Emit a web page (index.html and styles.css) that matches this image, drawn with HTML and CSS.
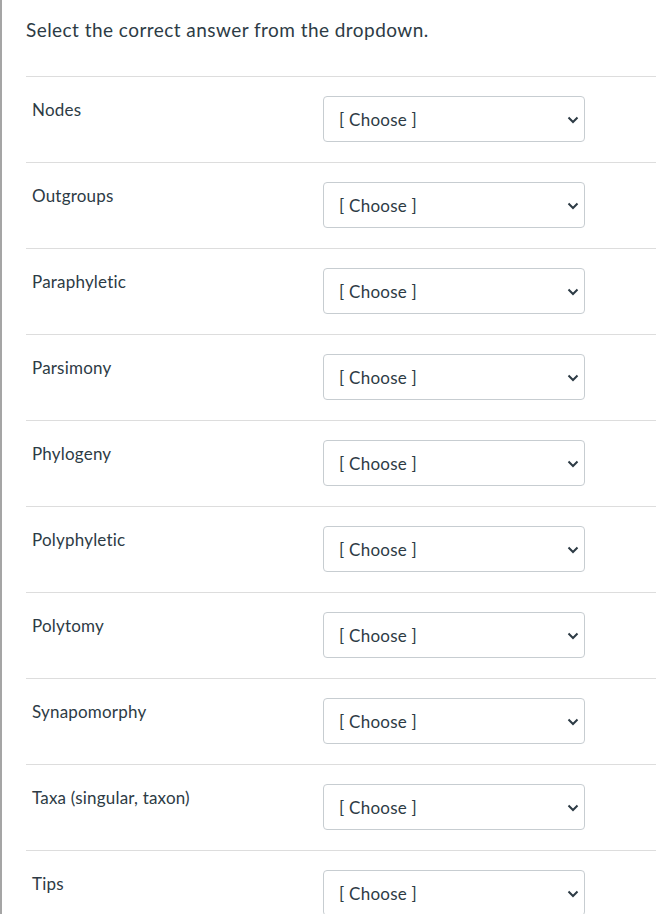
FILE: index.html
```html
<!DOCTYPE html>
<html lang="en">
<head>
<meta charset="utf-8">
<title>Dropdown question</title>
<link rel="stylesheet" href="styles.css">
</head>
<body>
<div class="page">
  <p class="prompt">Select the correct answer from the dropdown.</p>
  <div class="rows">
    <div class="row"><div class="label">Nodes</div><div class="pick"><select class="sel"><option>[ Choose ]</option></select><svg class="chev" viewBox="0 0 12 8" width="12" height="8"><path d="M1.5 1.5 L6 6 L10.5 1.5" fill="none" stroke="#2d3b45" stroke-width="2"/></svg></div></div>
    <div class="row"><div class="label">Outgroups</div><div class="pick"><select class="sel"><option>[ Choose ]</option></select><svg class="chev" viewBox="0 0 12 8" width="12" height="8"><path d="M1.5 1.5 L6 6 L10.5 1.5" fill="none" stroke="#2d3b45" stroke-width="2"/></svg></div></div>
    <div class="row"><div class="label">Paraphyletic</div><div class="pick"><select class="sel"><option>[ Choose ]</option></select><svg class="chev" viewBox="0 0 12 8" width="12" height="8"><path d="M1.5 1.5 L6 6 L10.5 1.5" fill="none" stroke="#2d3b45" stroke-width="2"/></svg></div></div>
    <div class="row"><div class="label">Parsimony</div><div class="pick"><select class="sel"><option>[ Choose ]</option></select><svg class="chev" viewBox="0 0 12 8" width="12" height="8"><path d="M1.5 1.5 L6 6 L10.5 1.5" fill="none" stroke="#2d3b45" stroke-width="2"/></svg></div></div>
    <div class="row"><div class="label">Phylogeny</div><div class="pick"><select class="sel"><option>[ Choose ]</option></select><svg class="chev" viewBox="0 0 12 8" width="12" height="8"><path d="M1.5 1.5 L6 6 L10.5 1.5" fill="none" stroke="#2d3b45" stroke-width="2"/></svg></div></div>
    <div class="row"><div class="label">Polyphyletic</div><div class="pick"><select class="sel"><option>[ Choose ]</option></select><svg class="chev" viewBox="0 0 12 8" width="12" height="8"><path d="M1.5 1.5 L6 6 L10.5 1.5" fill="none" stroke="#2d3b45" stroke-width="2"/></svg></div></div>
    <div class="row"><div class="label">Polytomy</div><div class="pick"><select class="sel"><option>[ Choose ]</option></select><svg class="chev" viewBox="0 0 12 8" width="12" height="8"><path d="M1.5 1.5 L6 6 L10.5 1.5" fill="none" stroke="#2d3b45" stroke-width="2"/></svg></div></div>
    <div class="row"><div class="label">Synapomorphy</div><div class="pick"><select class="sel"><option>[ Choose ]</option></select><svg class="chev" viewBox="0 0 12 8" width="12" height="8"><path d="M1.5 1.5 L6 6 L10.5 1.5" fill="none" stroke="#2d3b45" stroke-width="2"/></svg></div></div>
    <div class="row"><div class="label">Taxa (singular, taxon)</div><div class="pick"><select class="sel"><option>[ Choose ]</option></select><svg class="chev" viewBox="0 0 12 8" width="12" height="8"><path d="M1.5 1.5 L6 6 L10.5 1.5" fill="none" stroke="#2d3b45" stroke-width="2"/></svg></div></div>
    <div class="row"><div class="label">Tips</div><div class="pick"><select class="sel"><option>[ Choose ]</option></select><svg class="chev" viewBox="0 0 12 8" width="12" height="8"><path d="M1.5 1.5 L6 6 L10.5 1.5" fill="none" stroke="#2d3b45" stroke-width="2"/></svg></div></div>
  </div>
</div>
</body>
</html>
```
FILE: styles.css
```css
html, body {
  margin: 0;
  padding: 0;
  background: #ffffff;
}
body {
  font-family: Lato, "Liberation Sans", sans-serif;
  color: #2d3b45;
  overflow: hidden;
}
.page {
  border-left: 2px solid #a5a5a5;
  min-height: 914px;
  box-sizing: border-box;
  padding-left: 24px;
}
.prompt {
  margin: 0;
  padding-top: 17px;
  height: 76px;
  box-sizing: border-box;
  font-size: 19px;
  line-height: 26px;
  letter-spacing: 0.45px;
}
.row {
  border-top: 1px solid #dddddd;
  height: 86px;
  box-sizing: border-box;
  display: flex;
  align-items: flex-start;
  padding: 19px 0 0 6px;
}
.label {
  width: 291px;
  margin-top: 2px;
  font-size: 17px;
  line-height: 24px;
  letter-spacing: 0.2px;
}
.pick {
  position: relative;
  width: 262px;
  height: 46px;
}
.sel {
  appearance: none;
  -webkit-appearance: none;
  width: 262px;
  height: 46px;
  margin: 0;
  box-sizing: border-box;
  border: 1px solid #c7cdd1;
  border-radius: 4px;
  background: #ffffff;
  padding: 0 30px 0 15px;
  font-family: Lato, "Liberation Sans", sans-serif;
  font-size: 17px;
  letter-spacing: 0.25px;
  color: #2d3b45;
}
.chev {
  position: absolute;
  right: 6px;
  top: 20px;
  pointer-events: none;
}
```
